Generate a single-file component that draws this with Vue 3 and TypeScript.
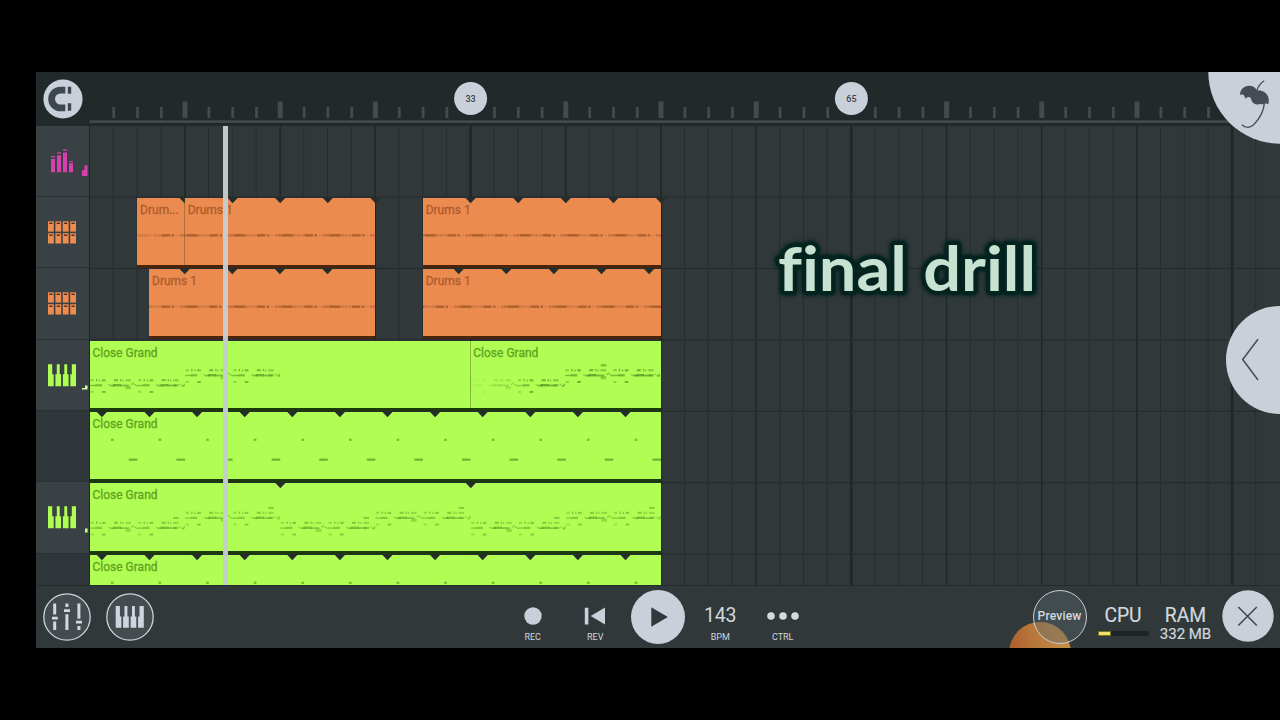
<script setup lang="ts">
type Rect = { x: number; y: number; w: number; h: number; o: number }
type Clip = { start: number; end: number; label: string; notes: Rect[]; marks: number[]; seam?: boolean }
type Track = { icon: 'meter' | 'pads' | 'keys' | 'none'; tone: 'pink' | 'orange' | 'green'; level: number; clips: Clip[] }

const BAR = 11.9
const LANES = 7
const LANE_H = 71.4
const px = (bars: number) => bars * BAR

const every = (from: number, step: number, to: number): number[] => {
  const out: number[] = []
  for (let v = from; v <= to; v += step) out.push(v)
  return out
}

const clipRects = (rects: Rect[], width: number): Rect[] =>
  rects
    .filter((r) => r.x + r.w > 0 && r.x < width)
    .map((r) => ({ ...r, x: Math.max(0, r.x), w: Math.min(width, r.x + r.w) - Math.max(0, r.x) }))

const beat: [number, number, number][] = [
  [1.5, 11.2, 0.85], [12.9, 3.6, 0.4], [17.2, 2.6, 0.4], [20.6, 3.4, 0.35], [24.4, 8.4, 0.8],
  [33.2, 1.4, 0.3], [34.8, 2, 0.85], [38, 3, 0.14], [42.4, 2.6, 0.5], [45.4, 3.4, 0.55],
]
function drums(start: number, end: number, phase: number, y: number, softStart = false): Rect[] {
  const out: Rect[] = []
  for (let b = phase - 4; b < end; b += 4) {
    const base = px(b - start)
    for (const [x, w, o] of beat) {
      const soft = softStart && base + x < 13
      out.push({ x: base + x, y, w, h: 2.6, o: soft ? o * 0.35 : o })
    }
  }
  return clipRects(out, px(end - start))
}

const phrase: [number, number, number, number, number][] = [
  [0.5, -6, 3.2, 2, 0.5], [6, -6.3, 1.3, 2.4, 0.8], [9.2, -5.6, 1.2, 1.8, 0.8], [12, -6, 3.6, 2.2, 0.7],
  [0, -0.4, 6, 1.4, 0.65], [5.5, -1, 6.5, 2.2, 0.7], [0.5, 5.8, 3.2, 1.8, 0.45], [12, 5.8, 3.6, 1.9, 0.75],
  [18, -1, 2, 1.3, 0.45], [20, -0.4, 5, 1.6, 0.75], [23, -1.2, 8, 2.4, 0.8], [24, -6, 4, 2, 0.75],
  [30, -6.3, 1.3, 2.4, 0.7], [32.3, -5.6, 1.2, 1.8, 0.7], [30, -0.6, 9, 1.8, 0.7], [35.5, -6, 5.5, 2.2, 0.5],
]
const turn: [number, number, number, number, number][] = [
  [35.5, 1, 5.5, 3, 0.5], [41, -1.6, 1.4, 1.4, 0.7], [42.4, -2.6, 1.6, 1.3, 0.7], [44.2, -1.2, 2, 1.4, 0.6], [46, -0.2, 2, 1.4, 0.5],
]
const lift: [number, number, number, number, number][] = [
  [36, -1, 5, 2.2, 0.6], [42, -1.4, 1.5, 1.3, 0.6], [43.5, -0.2, 1.6, 1.3, 0.5], [45, 0, 1.6, 1.6, 0.8], [46, -1.6, 1.3, 2, 0.7],
]
const high: [number, number, number, number, number] = [35.5, -11, 5.5, 2.2, 0.65]

function melody(sections: number[], strength: number, fadeIn = false, capFirst = false): Rect[] {
  const out: Rect[] = []
  sections.forEach((mid, s) => {
    for (const half of [0, 1]) {
      const base = px(s * 8 + half * 4)
      const parts = [...phrase, ...(half === 0 ? turn : lift)]
      if (half === 1 && capFirst) parts.push(high)
      if (half === 0 && fadeIn && s === 1) parts.push(high)
      for (const [x, y, w, h, o] of parts) {
        const k = fadeIn ? Math.min(1, 0.16 + Math.max(0, base + x - 16) / 55) : 1
        out.push({ x: base + x, y: mid + y, w, h, o: o * strength * k })
      }
    }
  })
  return out
}

function pluck(): Rect[] {
  const out: Rect[] = []
  for (let i = 0; i < 12; i++) {
    out.push({ x: px(i * 4) + 21, y: 26.7, w: 2.6, h: 2.2, o: 0.65 })
    out.push({ x: px(i * 4) + 38.8, y: 46.6, w: 8.6, h: 2.1, o: 0.72 })
  }
  return out
}

const pluckMarks = every(1, 4, 47)
const tracks: Track[] = [
  { icon: 'meter', tone: 'pink', level: 3, clips: [] },
  {
    icon: 'pads', tone: 'orange', level: 0, clips: [
      { start: 4, end: 8, label: 'Drum...', notes: drums(4, 8, 4, 36, true), marks: [8] },
      { start: 8, end: 24, label: 'Drums 1', notes: drums(8, 24, 8, 36), marks: [12, 16, 20, 24], seam: true },
      { start: 28, end: 48, label: 'Drums 1', notes: drums(28, 48, 28, 36), marks: [32, 36, 40, 44, 48] },
    ],
  },
  {
    icon: 'pads', tone: 'orange', level: 0, clips: [
      { start: 5, end: 24, label: 'Drums 1', notes: drums(5, 24, 4, 36.4), marks: [8, 12, 16, 20] },
      { start: 28, end: 48, label: 'Drums 1', notes: drums(28, 48, 27, 36.4), marks: [31, 35, 39, 43, 47] },
    ],
  },
  {
    icon: 'keys', tone: 'green', level: 2, clips: [
      { start: 0, end: 32, label: 'Close Grand', notes: melody([44.2, 34.2], 0.85), marks: [] },
      { start: 32, end: 48, label: 'Close Grand', notes: melody([44.2, 34.2], 0.95, true), marks: [], seam: true },
    ],
  },
  { icon: 'none', tone: 'green', level: 0, clips: [{ start: 0, end: 48, label: 'Close Grand', notes: pluck(), marks: pluckMarks }] },
  {
    icon: 'keys', tone: 'green', level: 1, clips: [
      { start: 0, end: 48, label: 'Close Grand', notes: melody([44.8, 34.8, 44.8, 34.8, 44.8, 34.8], 0.68, false, true), marks: [16, 32] },
    ],
  },
  { icon: 'none', tone: 'green', level: 0, clips: [{ start: 0, end: 48, label: 'Close Grand', notes: pluck(), marks: pluckMarks }] },
]

const gapBefore = (clips: Clip[], i: number) => px(clips[i].start - (i === 0 ? 0 : clips[i - 1].end))
const ticks = every(2, 2, 98).filter((b) => b % 32 !== 0)
const columns = every(2, 2, 98)
const badges = [33, 65]
</script>

<template>
  <div class="stage">
    <div class="app">
      <header class="ruler">
        <div class="corner">
          <svg class="magnet" viewBox="0 0 40 40">
            <circle cx="20" cy="20" r="19.600" fill="#c9d0da" />
            <path d="M22.300 11.100H17.500a8.900 8.900 0 0 0 0 17.800h4.800" fill="none" stroke="#3e474e" stroke-width="6.800" />
            <path d="M24.800 7.700h3.400v7h-3.400zM24.800 24.200h3.400v7.600h-3.400z" fill="#3e474e" />
          </svg>
        </div>
        <svg class="scale" viewBox="0 0 1191 54">
          <rect
            v-for="b in ticks" :key="b"
            :x="px(b) - (b % 8 === 0 ? 1.7 : 0.5)" :y="b % 8 === 0 ? 29.5 : 35"
            :width="b % 8 === 0 ? 5 : 2.8" :height="b % 8 === 0 ? 16.5 : 11" fill="#434b4e"
          />
          <rect x="0.500" y="48.300" width="1191" height="2.600" fill="#434b4e" />
          <g v-for="n in badges" :key="n">
            <circle :cx="px(n - 1) + 0.800" cy="26.500" r="16.500" fill="#c9d0da" />
            <text :x="px(n - 1) + 0.800" y="29.500" text-anchor="middle" class="badge-text">{{ n }}</text>
          </g>
        </svg>
        <svg class="logo" viewBox="0 0 72 72">
          <circle cx="72" cy="0" r="71.700" fill="#c9d0da" />
          <path d="M32 22.500c.3-5 4-8.700 9-8.700c4 0 6.500 2 7.800 4.500c5-.3 9.500 2 11.200 6c1 2.800 1 5 .3 8c-1.500-1-3-1.300-4.800-.2c-1.500.9-3-.9-4.500.1c-3 .8-6-.5-7.200-3.200c-.8-1.800-1-3.300-2-3.700c-2-.7-3.500.2-4 1.400c-1.500-1.300-1.300-3.600-2.700-4.100c-1.100-.1-1.600.4-3.100-.1z" fill="#454c56" />
          <path d="M48.700 18.500c1.500-4 3.800-7.200 7.500-9.700" fill="none" stroke="#454c56" stroke-width="1.200" />
          <path d="M56.300 31.500c-.6 5.500-2.700 11-6 15.700c-3 4.300-6.300 8-10 8.200c-2.600.2-4.700-1-6.300-2.700" fill="none" stroke="#454c56" stroke-width="1.400" />
        </svg>
      </header>

      <main class="playlist">
        <svg class="grid" viewBox="0 0 1191 460">
          <rect
            v-for="b in columns" :key="b"
            :x="px(b) + (b % 32 === 0 ? -0.5 : 0)" y="0" :width="b % 32 === 0 ? 2.5 : b % 8 === 0 ? 1.5 : 1" height="460"
            :fill="b % 8 === 0 ? '#1f2628' : '#262d2f'"
          />
          <rect v-for="l in LANES" :key="l" x="0" :y="l * LANE_H - 0.9" width="1191" height="1.200" fill="#252c2e" />
        </svg>
        <div v-for="(t, ti) in tracks" :key="ti" class="track" :class="t.tone">
          <div class="head" :class="{ sub: t.icon === 'none' }">
            <svg v-if="t.icon === 'meter'" class="glyph" viewBox="0 0 54 71" fill="#d83fae">
              <path d="M15 33h4v13.300h-4zM21 29.300h4v17h-4zM27 26.500h4v19.800h-4zM33 37.300h4v9h-4z" />
              <path d="M15 30h4v1.500h-4zM21 26.300h4v1.500h-4zM27 23.300h4v1.500h-4zM33 35h4v1.200h-4z" opacity=".85" />
            </svg>
            <svg v-else-if="t.icon === 'pads'" class="glyph" viewBox="0 0 54 71">
              <g v-for="n in 8" :key="n" :transform="`translate(${12 + ((n - 1) % 4) * 7.4} ${n < 5 ? 24.3 : 36.2})`">
                <rect width="5.800" height="10.300" fill="#ee8c50" />
                <rect x="1.300" y="1.300" width="3.200" height="1.400" fill="#4b2c1c" />
              </g>
            </svg>
            <svg v-else-if="t.icon === 'keys'" class="glyph" viewBox="0 0 54 71" fill="#b0fe53">
              <path d="M12 24.200h4.200v10h1.500v12H12zM20.800 24.200h2.900v10h1.400v12h-5.700v-12h1.400zM28.300 24.200h2.900v10h1.400v12h-5.700v-12h1.400zM35.800 24.200H40v22h-5.700v-12h1.500z" />
            </svg>
            <svg class="level" viewBox="0 0 8 14">
              <path v-if="t.level === 3" d="M1 7h2.500V2.300h3V13H1z" fill="#d83fae" />
              <path v-if="t.level === 2" d="M1 11h3V8.500h2.500V12.500H1z" fill="#d7ff9f" />
              <path v-if="t.level === 1" d="M4 9.500h2.600v4H4z" fill="#c7ff7c" />
            </svg>
          </div>
          <div class="lane">
            <div
              v-for="(c, i) in t.clips" :key="i" class="clip" :class="{ seam: c.seam }"
              :style="{ width: px(c.end - c.start) + 'px', marginLeft: gapBefore(t.clips, i) + 'px' }"
            >
              <span class="name">{{ c.label }}</span>
              <svg class="notes" :viewBox="`0 0 ${px(c.end - c.start)} 67.5`" preserveAspectRatio="none">
                <rect v-for="(r, k) in c.notes" :key="k" :x="r.x" :y="r.y" :width="r.w" :height="r.h" :fill-opacity="r.o" />
                <path
                  v-for="m in c.marks" :key="'m' + m" class="mark"
                  :d="`M${px(m - c.start) - 5.5} -.5h11l-5.500 5.700z`"
                />
              </svg>
            </div>
          </div>
        </div>
        <div class="playhead"></div>
        <svg class="caption" viewBox="0 0 300 90">
          <text x="20" y="61.300" textLength="258" lengthAdjust="spacingAndGlyphs">final drill</text>
        </svg>
      </main>

      <footer class="bar">
        <div class="left">
          <svg class="round" viewBox="0 0 48 48">
            <circle cx="24" cy="24" r="23.200" fill="#444c50" stroke="#cbd2d8" stroke-width="1.300" />
            <path d="M10.200 10.500h3v11h-3zM9 23.800h5.800v2.700H9zM10.200 28.500h3v8.500h-3zM22.400 10.500h3v3.500h-3zM21 16.300h6v2.800h-6zM22.400 21.200h3V37h-3zM34.400 10.500h3v15.300h-3zM33 27.700h6v2.800h-6zM34.400 33h3v4h-3z" fill="#d2d9df" />
          </svg>
          <svg class="round" viewBox="0 0 48 48">
            <circle cx="24" cy="24" r="23.200" fill="#444c50" stroke="#cbd2d8" stroke-width="1.300" />
            <path d="M9.700 13h4.200v10.500h1.500v11.300H9.700zM18.500 13h2.900v10.500h1.400v11.300h-5.700V23.500h1.400zM26 13h2.900v10.500h1.400v11.300h-5.700V23.500H26zM33.500 13h4.300v21.800h-5.700V23.500h1.400z" fill="#ced5e0" />
          </svg>
        </div>
        <div class="transport">
          <div class="cell">
            <svg class="ic" viewBox="0 0 30 20"><circle cx="15" cy="10" r="8.700" fill="#c9d0da" /></svg>
            <span>REC</span>
          </div>
          <div class="cell">
            <svg class="ic" viewBox="0 0 30 20" fill="#c9d0da"><path d="M4.800 1.700h3.600v16.700H4.800zM25 1.500v17L10.700 10z" /></svg>
            <span>REV</span>
          </div>
          <svg class="play" viewBox="0 0 54 54">
            <circle cx="27" cy="27" r="27" fill="#c9d0da" />
            <path d="M20.300 17.300v19.400L36.800 27z" fill="#30383c" />
          </svg>
          <div class="cell">
            <b>143</b>
            <span>BPM</span>
          </div>
          <div class="cell">
            <svg class="ic dots" viewBox="0 0 34 20" fill="#d2d9df"><circle cx="5" cy="10" r="3.800" /><circle cx="17" cy="10" r="3.800" /><circle cx="29" cy="10" r="3.800" /></svg>
            <span>CTRL</span>
          </div>
        </div>
        <div class="right">
          <div class="preview">Preview</div>
          <div class="stat cpu"><b>CPU</b><div class="load"><i></i></div></div>
          <div class="stat ram"><b>RAM</b><em>332 MB</em></div>
          <svg class="close" viewBox="0 0 52 52">
            <circle cx="26" cy="26" r="25.700" fill="#c9d0da" />
            <path d="M16.300 17l18.500 18.500M34.800 17L16.300 35.500" stroke="#3c4452" stroke-width="1.500" />
          </svg>
        </div>
        <div class="bubble"></div>
      </footer>

      <svg class="drawer" viewBox="0 0 54 108">
        <circle cx="54" cy="54" r="54" fill="#c9d0da" />
        <path d="M32.500 33.300L17.200 53.500l15.300 20.500" transform="translate(-.5 0)" fill="none" stroke="#454c58" stroke-width="1.500" />
      </svg>
    </div>
  </div>
</template>

<style>
html, body { margin: 0; background: #000; overflow: hidden; }
</style>

<style scoped>
.stage { box-sizing: border-box; width: 1280px; height: 720px; padding: 72px 0 72px 36px; background: #000; font-family: Roboto, "Liberation Sans", sans-serif; overflow: hidden; }
.app { position: relative; display: flex; flex-direction: column; width: 1244px; height: 576px; background: #30383a; overflow: hidden; }
svg { display: block; flex: none; }

.ruler { position: relative; display: flex; flex: none; height: 53.5px; background: #22292b; }
.corner { display: flex; align-items: center; justify-content: center; width: 53px; height: 53px; flex: none; }
.magnet { width: 40px; height: 40px; }
.scale { width: 1191px; height: 54px; }
.badge-text { font-size: 9px; font-weight: 500; fill: #3c444b; }
.logo { position: absolute; right: 0; top: 0; width: 72px; height: 72px; z-index: 4; }

.playlist { position: relative; flex: none; height: 460px; overflow: hidden; background: #30383a; }
.grid { position: absolute; left: 53px; top: 0; width: 1191px; height: 460px; }
.track { position: relative; display: flex; height: 71.4px; }
.head { position: relative; box-sizing: border-box; display: flex; width: 53.5px; height: 71.4px; flex: none; background: #3a4144; border-right: 1px solid #1f2628; border-bottom: 1px solid #293032; }
.head.sub { background: #30373a; }
.glyph { width: 54px; height: 71px; }
.level { position: absolute; left: 45px; top: 37px; width: 8px; height: 14px; }
.lane { display: flex; flex: 1; align-items: flex-start; padding-top: 1px; }
.clip { position: relative; flex: none; box-sizing: border-box; height: 67.2px; }
.orange .clip { background: #ec8b50; color: #ad5c2c; box-shadow: 0 3px 0 #4b240c, 1px 0 0 #351c0d; }
.green .clip { background: #b0fe53; color: #62a31f; box-shadow: 0 3px 0 #1b3a0b, 1px 0 0 #1c3510; }
.clip.seam::before { content: ""; position: absolute; left: -.8px; top: 0; width: 1px; height: 100%; background: rgba(60, 80, 20, .38); }
.name { position: absolute; left: 3px; top: 5px; font-size: 12px; line-height: 15px; letter-spacing: 0; font-weight: 400; white-space: nowrap; -webkit-text-stroke: .3px currentColor; }
.notes { width: 100%; height: 67.5px; overflow: visible; }
.orange .notes { fill: #a5592a; }
.green .notes { fill: #579322; }
.notes .mark { fill: #252d2b; }
.playhead { position: absolute; left: 187px; top: 0; width: 5px; height: 460px; background: #c6ced2; opacity: .96; }
.caption { position: absolute; left: 722px; top: 104px; width: 300px; height: 90px; overflow: visible; }
.caption text { font-family: Lato, sans-serif; font-weight: 700; font-size: 62px; fill: #c8e2d2; stroke: #03231f; stroke-width: 7px; stroke-linejoin: round; paint-order: stroke; filter: drop-shadow(0 0 2px #03231f) drop-shadow(0 0 1px #03231f); font-variant-ligatures: none; }

.bar { position: relative; display: grid; grid-template-columns: 1fr auto 1fr; align-items: start; flex: 1; background: #30383a; box-shadow: 0 -1px 0 #252c2e; color: #d0d7dd; }
.left { display: flex; gap: 14.5px; padding: 7px 0 0 7px; }
.round { width: 48px; height: 48px; }
.transport { display: flex; padding: 4px .6px 0 0; }
.cell { display: flex; flex-direction: column; align-items: center; width: 62.5px; padding-top: 16.5px; }
.cell .ic { width: 30px; height: 20px; }
.cell .dots { width: 34px; }
.cell b { height: 20px; font-size: 19.500px; line-height: 19px; font-weight: 400; letter-spacing: -.1px; }
.cell span { margin-top: 5.5px; font-size: 9px; line-height: 11px; }
.play { width: 54px; height: 54px; margin: 0 4.250px; }
.right { position: relative; z-index: 2; display: flex; justify-content: flex-end; padding: 4px 6px 0 0; }
.preview { box-sizing: border-box; width: 54px; height: 54px; border: 1.500px solid #c9d0d6; border-radius: 50%; background: rgba(92, 103, 107, .42); text-align: center; font-size: 12.200px; line-height: 50px; font-weight: 500; letter-spacing: .1px; }
.stat { display: flex; flex-direction: column; align-items: center; padding-top: 15.5px; }
.stat b { font-size: 19.300px; line-height: 22px; font-weight: 400; -webkit-text-stroke: .2px currentColor; }
.stat em { margin-top: -1px; font-size: 15px; line-height: 16px; font-style: normal; white-space: nowrap; -webkit-text-stroke: .2px currentColor; }
.cpu { width: 51px; margin-left: 11px; }
.ram { width: 54px; margin-left: 10px; }
.load { width: 51px; height: 5px; margin-top: 4px; background: #1e2527; }
.load i { display: block; width: 11px; height: 2.500px; background: #f2df6c; border: 1px solid #77721f; }
.close { width: 52px; height: 52px; margin: .5px 0 0 9.5px; }
.bubble { position: absolute; z-index: 1; left: 973px; top: 36.500px; width: 62px; height: 62px; border-radius: 50%; background: linear-gradient(75deg, #ac5b2b 10%, #b8763a 45%, #c18b43 80%); }
.drawer { position: absolute; right: 0; top: 234px; width: 54px; height: 108px; z-index: 3; }
</style>
